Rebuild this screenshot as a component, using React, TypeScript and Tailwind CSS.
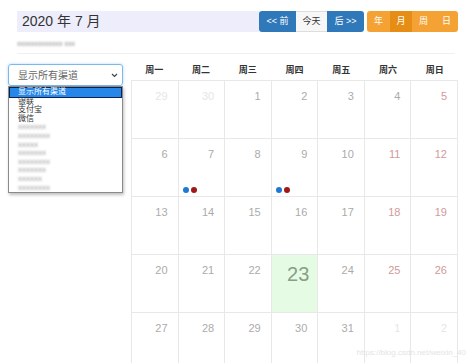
import React from 'react'

const weeks = ['周一', '周二', '周三', '周四', '周五', '周六', '周日']

type Day = { n: number; other?: boolean; dots?: boolean; today?: boolean }

const rows: Day[][] = [
  [{ n: 29, other: true }, { n: 30, other: true }, { n: 1 }, { n: 2 }, { n: 3 }, { n: 4 }, { n: 5 }],
  [{ n: 6 }, { n: 7, dots: true }, { n: 8 }, { n: 9, dots: true }, { n: 10 }, { n: 11 }, { n: 12 }],
  [{ n: 13 }, { n: 14 }, { n: 15 }, { n: 16 }, { n: 17 }, { n: 18 }, { n: 19 }],
  [{ n: 20 }, { n: 21 }, { n: 22 }, { n: 23, today: true }, { n: 24 }, { n: 25 }, { n: 26 }],
  [{ n: 27 }, { n: 28 }, { n: 29 }, { n: 30 }, { n: 31 }, { n: 1, other: true }, { n: 2, other: true }],
]

const options = ['银联', '支付宝', '微信']
const hidden = ['xxxxxxx', 'xxxxxxxx', 'xxxxx', 'xxxxxxx', 'xxxxxxxx', 'xxxxxxx', 'xxxxxx', 'xxxxxxxx']

function Cell({ d, row, col }: { d: Day; row: number; col: number }) {
  // sat of first row stays grey in the shot
  const weekend = (col === 6 || (col === 5 && row > 0)) && !d.other
  const color = d.other ? 'text-[#e6e6e6]' : weekend ? 'text-[#d09a9a]' : 'text-[#ababab]'
  return (
    <div className={`relative h-[58px] border-r border-b border-[#e8e8e8] ${d.today ? 'bg-[#e6fbe4]' : ''}`}>
      {d.today ? (
        <div className="pr-[8px] pt-[7px] text-right text-[20px] leading-[24px] text-[#86a086]">{d.n}</div>
      ) : (
        <div className={`pr-[10px] pt-[7px] text-right text-[11px] leading-[16px] ${color}`}>{d.n}</div>
      )}
      {d.dots && (
        <div className="absolute left-[4px] bottom-[3px] flex gap-[2px]">
          <span className="h-[6px] w-[6px] rounded-full bg-[#1f78d4]" />
          <span className="h-[6px] w-[6px] rounded-full bg-[#a11818]" />
        </div>
      )}
    </div>
  )
}

export default function App() {
  return (
    <div
      className="relative h-[363px] w-[474px] overflow-hidden bg-white text-[#333]"
      style={{ fontFamily: '"Liberation Sans", "Noto Sans CJK SC", sans-serif' }}
    >
      {/* toolbar */}
      <div className="flex items-center pl-[17px] pr-[16px] pt-[11px]">
        <div className="flex h-[21px] flex-1 items-center bg-[#ededfb] pl-[5px] text-[14px] text-[#333]">2020 年 7 月</div>
        <div className="flex h-[21px] text-[9px]">
          <button className="w-[37px] rounded-l-[3px] bg-[#2f78b9] text-white">&lt;&lt; 前</button>
          <button className="w-[31px] border-y border-[#ddd] bg-[#f7f7f7] text-[#333]">今天</button>
          <button className="w-[37px] rounded-r-[3px] bg-[#2f78b9] text-white">后 &gt;&gt;</button>
        </div>
        <div className="ml-[3px] flex h-[21px] text-[9px] text-white">
          <button className="w-[23px] rounded-l-[3px] bg-[#f4a233]">年</button>
          <button className="w-[22px] bg-[#e68d15]">月</button>
          <button className="w-[23px] bg-[#f4a233]">周</button>
          <button className="w-[23px] rounded-r-[3px] bg-[#f4a233]">日</button>
        </div>
      </div>

      <div className="ml-[17px] mt-[7px] h-[10px] text-[7px] leading-[10px] text-[#888] blur-[1px]">xxxxxxxxxxxxx xxx</div>
      <div className="ml-[17px] mr-[19px] mt-[4px] border-t border-[#f0f0f0]" />

      <div className="flex pt-[8px]">
        {/* left column */}
        <div className="relative w-[131px]">
          <div className="ml-[8px] mt-[2px] flex h-[22px] w-[115px] items-center justify-between rounded-[3px] border border-[#7cb8ea] pl-[9px] pr-[4px] text-[10px] text-[#666] shadow-[0_0_3px_rgba(102,175,233,0.5)]">
            <span>显示所有渠道</span>
            <svg width="7" height="5" viewBox="0 0 7 5">
              <path d="M1 1 L3.5 3.5 L6 1" stroke="#444" strokeWidth="1.2" fill="none" />
            </svg>
          </div>
          <div className="absolute left-[8px] top-[24px] w-[115px] border border-[#8a8a8a] bg-white text-[8px] leading-[8.6px] shadow-[1px_2px_3px_rgba(0,0,0,0.25)]">
            <div className="border border-[#0b2250] bg-[#2687e8] pl-[8px] text-white">显示所有渠道</div>
            {options.map(o => (
              <div key={o} className="pl-[9px] text-[#333]">{o}</div>
            ))}
            {hidden.map((h, i) => (
              <div key={i} className="pl-[9px] text-[#999] blur-[1.2px]">{h}</div>
            ))}
          </div>
        </div>

        {/* calendar */}
        <div className="w-[327px]">
          <div className="grid h-[18px] grid-cols-7 items-center text-center text-[9px] font-bold text-[#333]">
            {weeks.map(w => (
              <div key={w}>{w}</div>
            ))}
          </div>
          <div className="grid grid-cols-7 border-l border-t border-[#e8e8e8]">
            {rows.map((r, ri) => r.map((d, ci) => <Cell key={`${ri}-${ci}`} d={d} row={ri} col={ci} />))}
          </div>
        </div>
      </div>

      <div className="absolute bottom-[4px] right-[8px] text-[8px] text-[#e4e4e4]">https://blog.csdn.net/weixin_40</div>
    </div>
  )
}
